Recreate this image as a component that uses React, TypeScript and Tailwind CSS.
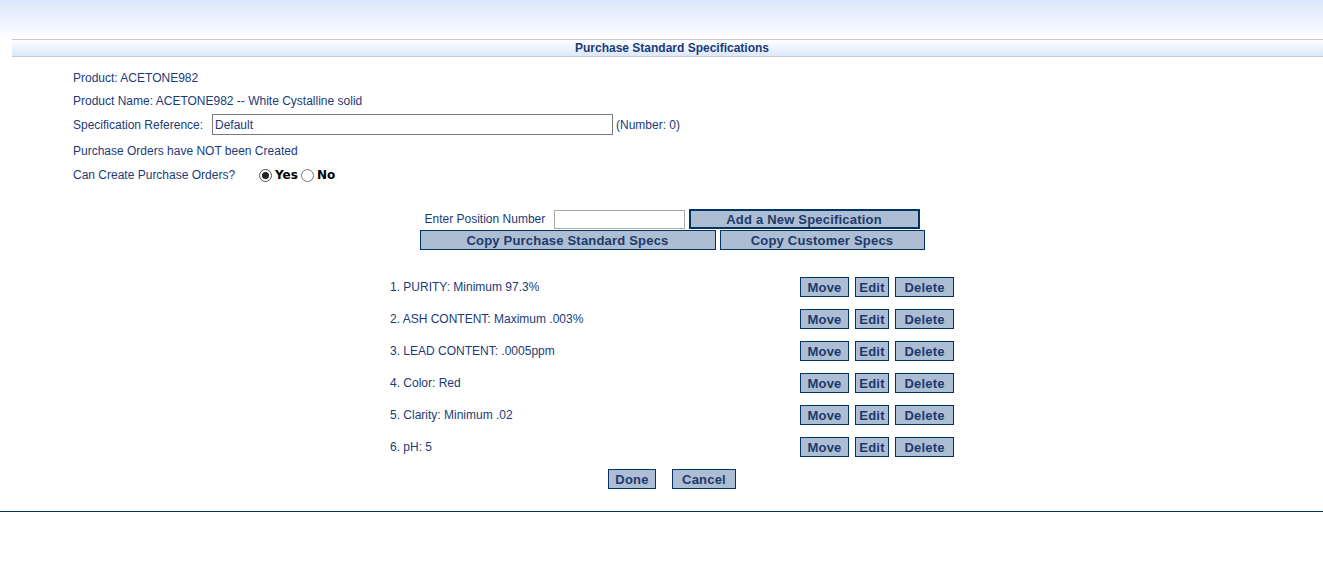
const specs = [
  "1. PURITY: Minimum 97.3%",
  "2. ASH CONTENT: Maximum .003%",
  "3. LEAD CONTENT: .0005ppm",
  "4. Color: Red",
  "5. Clarity: Minimum .02",
  "6. pH: 5",
];

const btn =
  "h-[20px] bg-[#adbdd3] border border-[#003366] text-[#1c3a6a] font-bold text-[13px] leading-none tracking-[0.2px]";

export default function App() {
  return (
    <div className="min-h-[570px] w-full overflow-hidden bg-white font-['Liberation_Sans',Arial,sans-serif] text-[12px] text-[#1b3b78]">
      {/* top gradient */}
      <div className="h-[39px] bg-gradient-to-b from-[#dae6fb] via-[#f3f7fe] via-70% to-white" />

      <div className="ml-[12px] w-[1320px]">
        {/* header bar */}
        <div className="flex h-[18px] items-center justify-center border-y border-[#c9c9c9] bg-gradient-to-b from-white to-[#dbe7fb] text-[12px] font-bold text-[#1b3b78]">
          Purchase Standard Specifications
        </div>

        {/* product details */}
        <div className="flex flex-col pl-[61px] pt-[13px]">
          <div className="flex h-[16px] items-center">Product: ACETONE982</div>
          <div className="mt-[7px] flex h-[16px] items-center">
            Product Name: ACETONE982 -- White Cystalline solid
          </div>
          <div className="mt-[5px] flex h-[21px] items-center">
            <span className="w-[130px] shrink-0 whitespace-nowrap">Specification Reference:</span>
            <input
              defaultValue="Default"
              className="ml-[9px] h-[21px] w-[401px] border border-[#7a7a7a] px-[2px] text-[12px] text-[#1b3b78] outline-none"
            />
            <span className="ml-[3px]">(Number: 0)</span>
          </div>
          <div className="mt-[8px] flex h-[16px] items-center">Purchase Orders have NOT been Created</div>
          <div className="mt-[8px] flex h-[16px] items-center">
            <span className="w-[180px] shrink-0 whitespace-nowrap">Can Create Purchase Orders?</span>
            <span className="ml-[6px] flex items-center font-['DejaVu_Sans',Verdana,sans-serif] text-[12px] font-bold text-black">
              <span className="flex h-[13px] w-[13px] items-center justify-center rounded-full border border-[#555] bg-white">
                <span className="h-[7px] w-[7px] rounded-full bg-[#222]" />
              </span>
              <span className="ml-[3px]">Yes</span>
              <span className="ml-[3px] h-[13px] w-[13px] rounded-full border border-[#777] bg-white" />
              <span className="ml-[3px]">No</span>
            </span>
          </div>
        </div>

        {/* add / copy controls */}
        <div className="mt-[26px] flex flex-col items-center">
          <div className="flex items-center">
            <span className="w-[125px] whitespace-nowrap">Enter Position Number</span>
            <input className="ml-[4px] h-[19px] w-[131px] border border-[#a9a9a9] outline-none" />
            <button className={btn + " ml-[4px] h-[20px] w-[231px] border-2 border-[#0c1b2c]"}>
              Add a New Specification
            </button>
          </div>
          <div className="mt-[1px] flex items-center gap-[4px]">
            <button className={btn + " w-[296px]"}>Copy Purchase Standard Specs</button>
            <button className={btn + " w-[205px]"}>Copy Customer Specs</button>
          </div>
        </div>

        {/* spec list */}
        <div className="mx-auto mt-[27px] flex w-[564px] flex-col gap-[12px]">
          {specs.map((s) => (
            <div key={s} className="flex h-[20px] items-center justify-between">
              <span>{s}</span>
              <div className="flex gap-[6px]">
                <button className={btn + " w-[49px]"}>Move</button>
                <button className={btn + " w-[34px]"}>Edit</button>
                <button className={btn + " w-[59px]"}>Delete</button>
              </div>
            </div>
          ))}
        </div>

        <div className="mt-[12px] flex justify-center gap-[16px]">
          <button className={btn + " w-[48px]"}>Done</button>
          <button className={btn + " w-[64px]"}>Cancel</button>
        </div>
      </div>

      <div className="mt-[22px] h-[1px] w-full bg-[#003366]" />
    </div>
  );
}
